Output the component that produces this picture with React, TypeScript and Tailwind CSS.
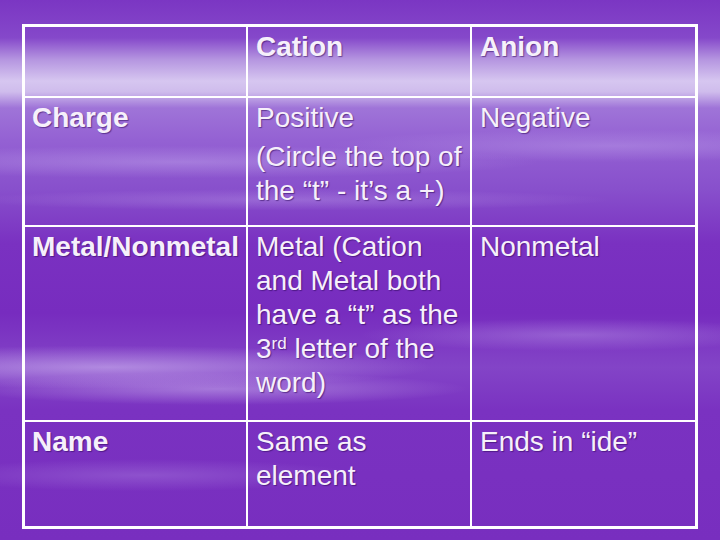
import React from 'react';

type Cell = {
  lines: React.ReactNode;
  bold?: boolean;
};

const rows: Cell[][] = [
  [
    { lines: null },
    { lines: 'Cation', bold: true },
    { lines: 'Anion', bold: true },
  ],
  [
    { lines: 'Charge', bold: true },
    {
      lines: (
        <>
          <p>Positive</p>
          <p className="mt-[5px]">(Circle the top of the “t” - it’s a +)</p>
        </>
      ),
    },
    { lines: 'Negative' },
  ],
  [
    { lines: 'Metal/Nonmetal', bold: true },
    {
      lines: (
        <p>
          Metal (Cation and Metal both have a “t” as the 3
          <span className="text-[17px] leading-none align-[9px]">rd</span> letter of the word)
        </p>
      ),
    },
    { lines: 'Nonmetal' },
  ],
  [
    { lines: 'Name', bold: true },
    { lines: 'Same as element' },
    { lines: 'Ends in “ide”' },
  ],
];

const App: React.FC = () => {
  return (
    <div
      className="w-[720px] h-[540px] overflow-hidden pt-[24px] pl-[22px] text-[#f6f0fb] font-['Liberation_Sans',Arial,sans-serif] [text-shadow:1px_1px_1px_rgba(45,10,90,0.55)]
        bg-[radial-gradient(ellipse_45%_4%_at_15%_68%,rgba(215,195,245,0.55),transparent),radial-gradient(ellipse_35%_3%_at_30%_72%,rgba(215,195,245,0.45),transparent),radial-gradient(ellipse_30%_3%_at_80%_62%,rgba(200,175,240,0.35),transparent),radial-gradient(ellipse_50%_3%_at_25%_30%,rgba(200,175,240,0.4),transparent),radial-gradient(ellipse_40%_3%_at_85%_27%,rgba(200,175,240,0.35),transparent),radial-gradient(ellipse_45%_2%_at_40%_37%,rgba(200,175,240,0.3),transparent),radial-gradient(ellipse_30%_3%_at_20%_88%,rgba(190,160,235,0.3),transparent),linear-gradient(180deg,#7b36c3_0%,#8548ca_7%,#b595e0_11%,#d6c6f0_15%,#cfbcec_17%,#9f74d8_20%,#9461d3_26%,#8850cc_35%,#7a31c1_45%,#772cbf_58%,#8344c7_68%,#7a32c1_76%,#782ebf_100%)]"
    >
      <div className="grid grid-cols-[223px_224px_223px] grid-rows-[71px_129px_195px_104px] w-[676px] border-[3px] border-white">
        {rows.map((row, r) =>
          row.map((cell, c) => (
            <div
              key={`${r}-${c}`}
              className={`text-[28px] leading-[34px] pt-[3px] ${c === 0 ? 'pl-[7px]' : 'pl-[8px]'} ${
                c < 2 ? 'border-r-2' : ''
              } ${r < 3 ? 'border-b-2' : ''} border-white ${cell.bold ? 'font-bold' : ''}`}
            >
              {cell.lines}
            </div>
          ))
        )}
      </div>
    </div>
  );
};

export default App;
